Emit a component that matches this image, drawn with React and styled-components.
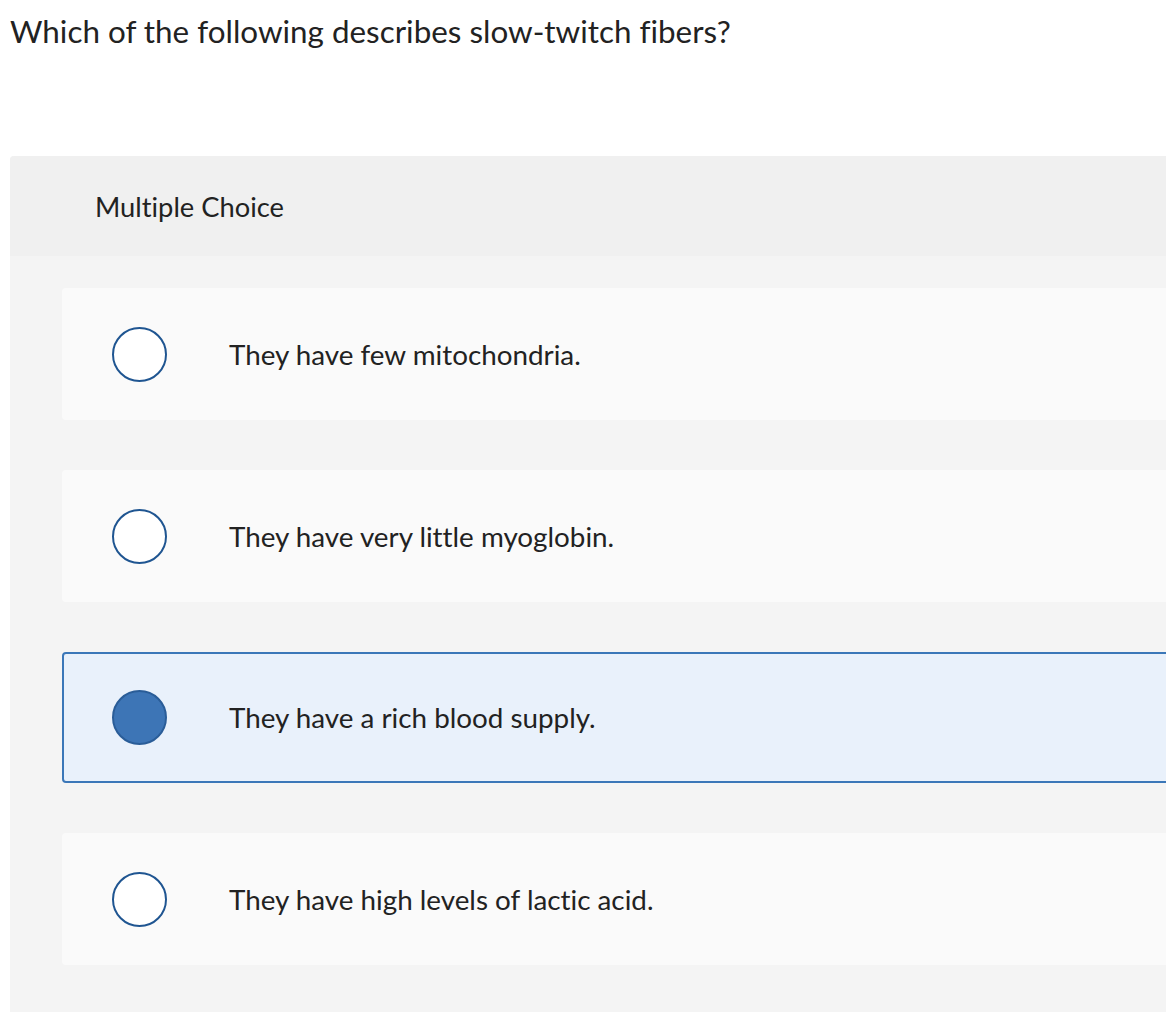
import React from "react";
import styled, { createGlobalStyle } from "styled-components";

const Global = createGlobalStyle`
  html, body { margin: 0; padding: 0; background: #fff; }
  body {
    font-family: Lato, "Open Sans", sans-serif;
    color: #222;
    overflow: hidden;
    font-variant-ligatures: none;
    font-feature-settings: "liga" 0;
  }
`;

const Page = styled.div`
  width: 1166px;
  height: 1012px;
  overflow: hidden;
`;

const Question = styled.h1`
  margin: 0;
  padding: 13px 0 0 10px;
  height: 156px;
  box-sizing: border-box;
  font-size: 31.4px;
  font-weight: 400;
  line-height: 36px;
  color: #222;
`;

const Panel = styled.section`
  margin-left: 10px;
  width: 1200px;
  background: #f4f4f4;
  border-radius: 4px 0 0 0;
  min-height: 900px;
`;

const Header = styled.div`
  height: 100px;
  display: flex;
  align-items: center;
  padding-left: 85px;
  background: #f0f0f0;
  border-radius: 4px 0 0 0;
  font-size: 27.3px;
  color: #222;
`;

const Options = styled.div`
  display: flex;
  flex-direction: column;
  gap: 50px;
  padding: 32px 0 0 52px;
`;

const Option = styled.label`
  display: flex;
  align-items: center;
  height: ${(p) => (p.$selected ? "131px" : "132px")};
  box-sizing: border-box;
  padding-left: ${(p) => (p.$selected ? "48px" : "50px")};
  border-radius: 4px;
  background: ${(p) => (p.$selected ? "#e9f1fb" : "#fafafa")};
  border: ${(p) => (p.$selected ? "2px solid #3b77b8" : "none")};
  cursor: pointer;
`;

const Radio = styled.span`
  width: 55px;
  height: 55px;
  box-sizing: border-box;
  border-radius: 50%;
  border: 2px solid ${(p) => (p.$selected ? "#2a5d98" : "#1f5591")};
  background: ${(p) => (p.$selected ? "#3d75b6" : "#fff")};
  flex: none;
`;

const Text = styled.span`
  margin-left: 62px;
  font-size: 27.8px;
  color: #222;
`;

const choices = [
  "They have few mitochondria.",
  "They have very little myoglobin.",
  "They have a rich blood supply.",
  "They have high levels of lactic acid.",
];

export default function App() {
  return (
    <Page>
      <Global />
      <Question>Which of the following describes slow-twitch fibers?</Question>
      <Panel>
        <Header>Multiple Choice</Header>
        <Options>
          {choices.map((c, i) => (
            <Option key={c} $selected={i === 2}>
              <Radio $selected={i === 2} />
              <Text>{c}</Text>
            </Option>
          ))}
        </Options>
      </Panel>
    </Page>
  );
}
